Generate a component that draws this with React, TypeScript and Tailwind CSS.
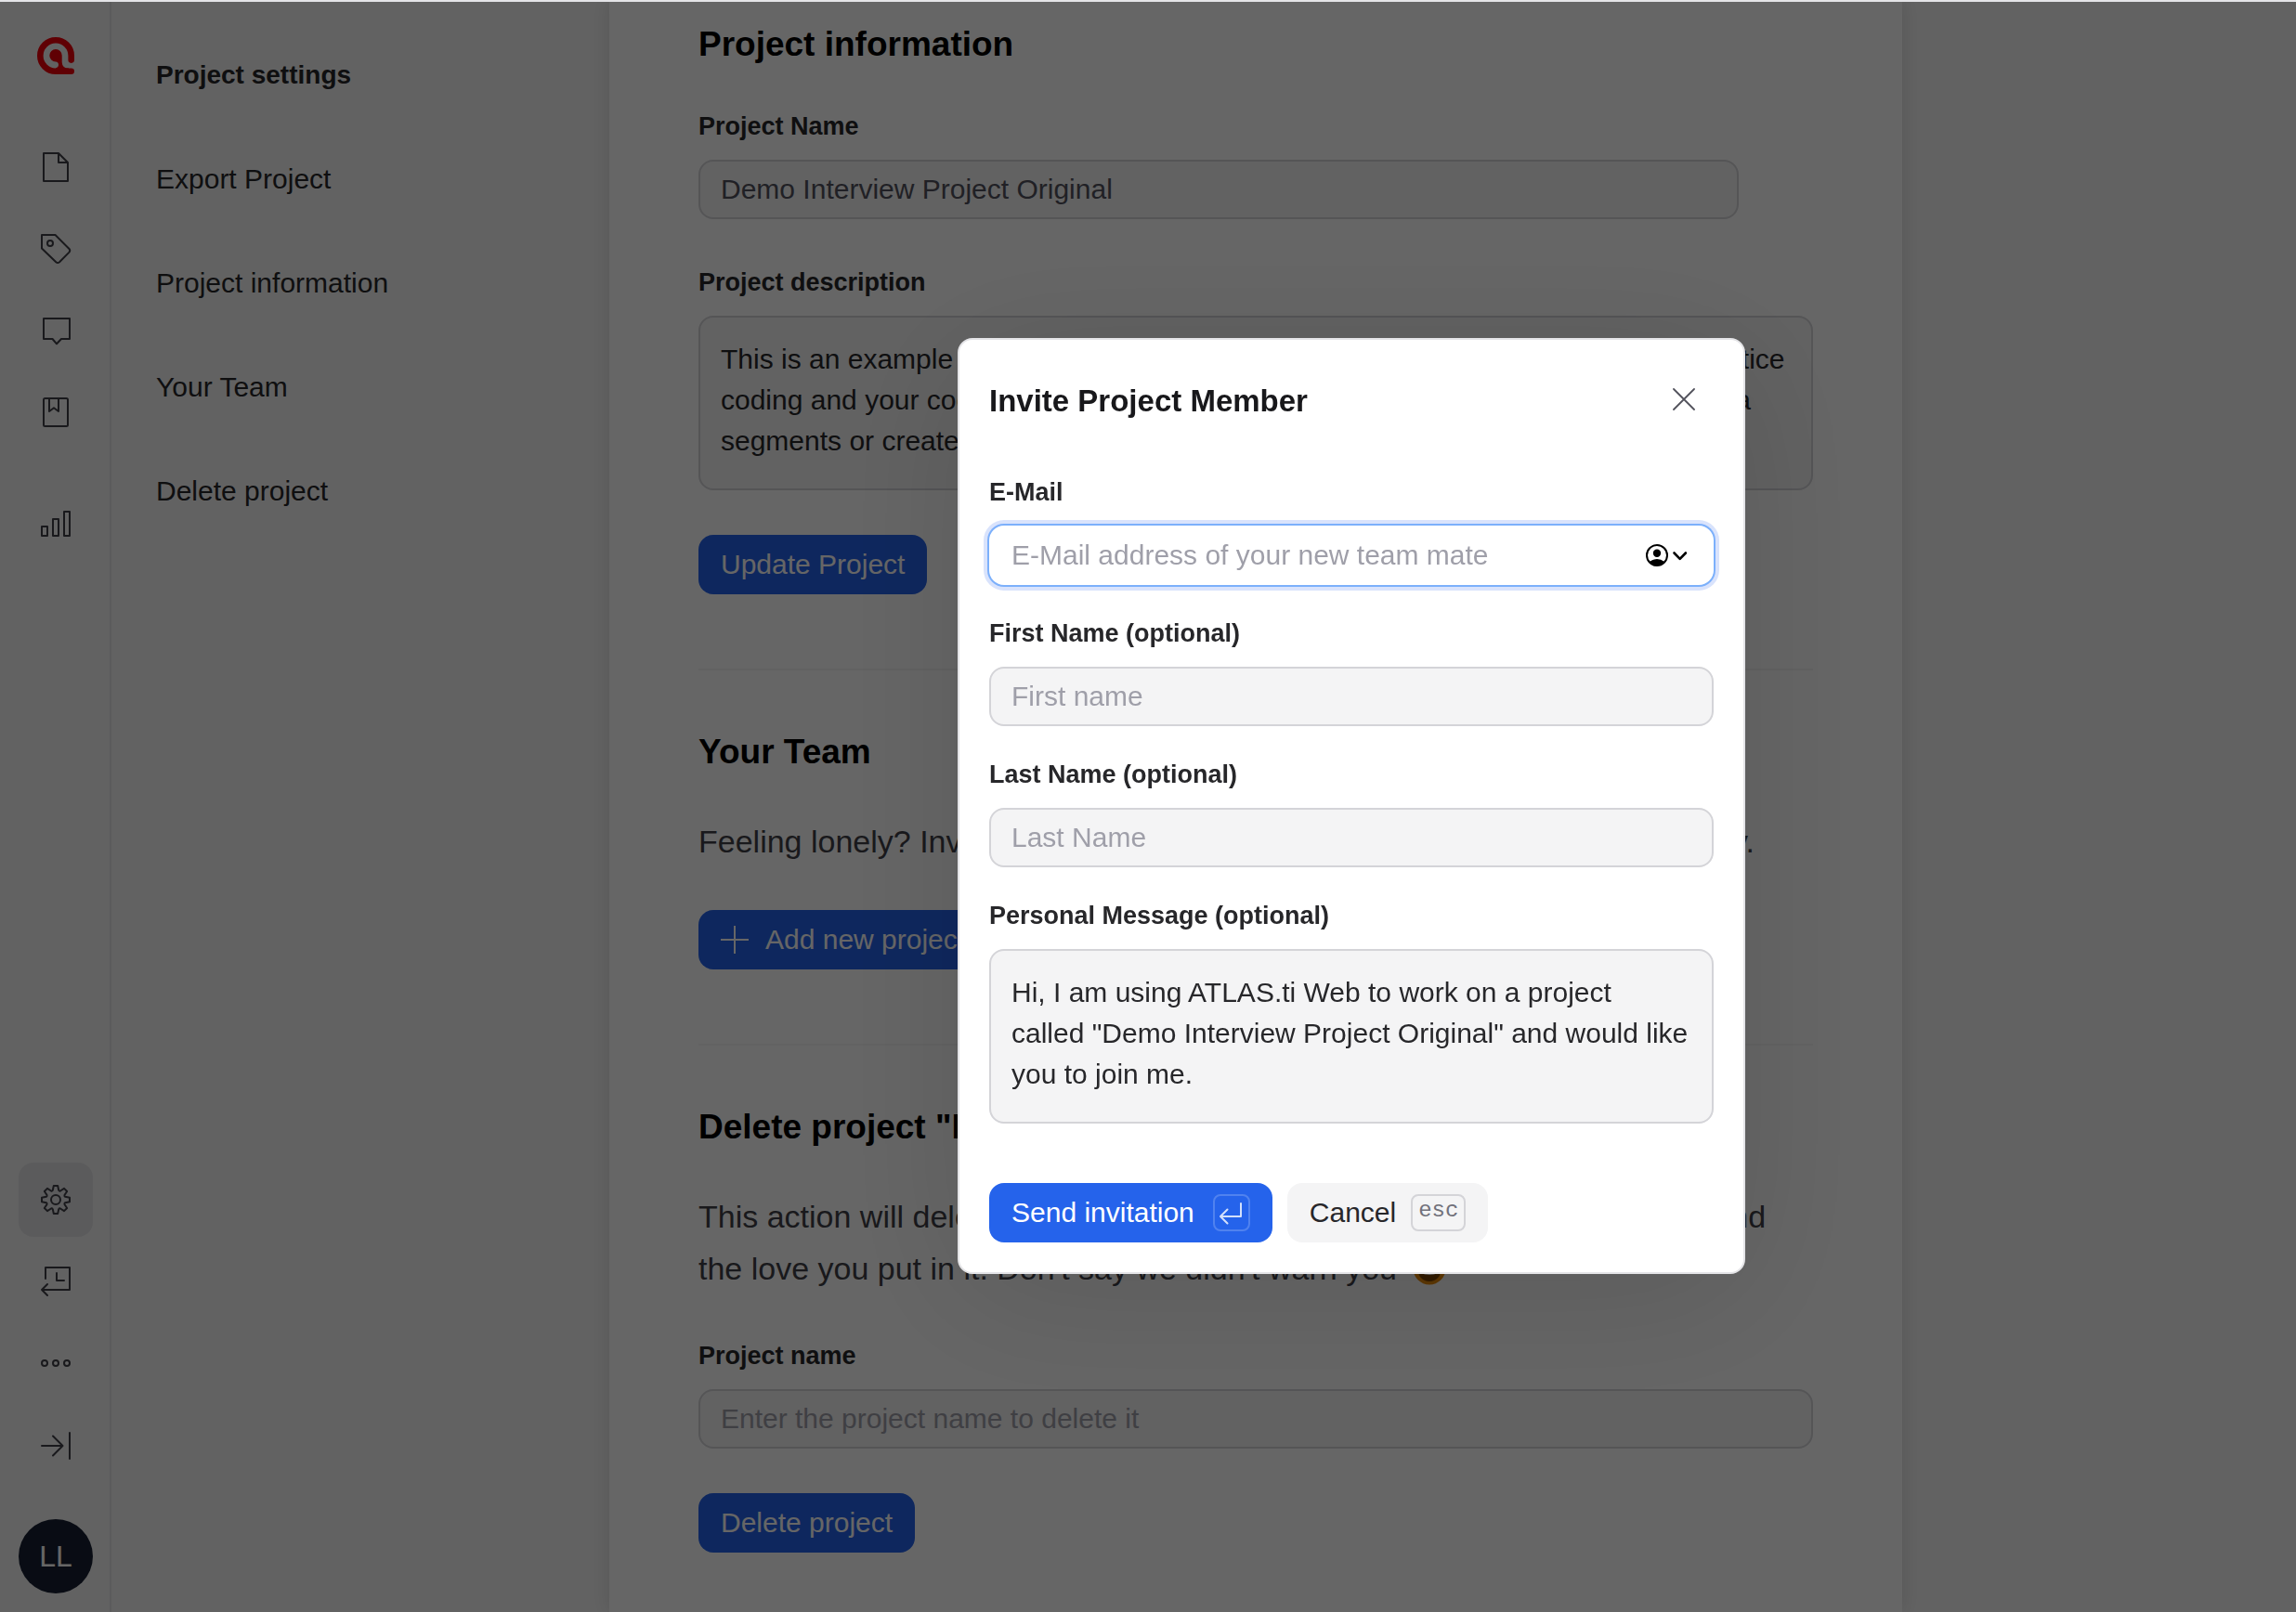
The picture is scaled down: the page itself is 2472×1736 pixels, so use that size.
import { useState } from 'react';
import type { ReactNode } from 'react';

const fieldClass =
  'w-full rounded-2xl border-2 border-zinc-300 bg-zinc-100 px-[22px] text-[30px] leading-[44px] placeholder:text-zinc-400 focus:outline-none';
const primaryButtonClass =
  'inline-flex h-16 items-center rounded-2xl bg-[#2563eb] px-6 text-[30px] leading-[44px] text-white';

const Icon = ({ children }: { children: ReactNode }) => (
  <svg viewBox="0 0 40 40" className="size-10" fill="none" stroke="currentColor" strokeWidth="2" strokeLinecap="round" strokeLinejoin="round" aria-hidden="true">
    {children}
  </svg>
);

const RailButton = ({ label, active, children }: { label: string; active?: boolean; children: ReactNode }) => (
  <button
    type="button"
    aria-label={label}
    className={`flex size-20 items-center justify-center rounded-2xl text-zinc-700 ${active ? 'bg-zinc-200' : ''}`}
  >
    <Icon>{children}</Icon>
  </button>
);

const Logo = () => (
  <svg viewBox="0 0 40 40" className="size-10" aria-hidden="true">
    <path d="M36.7 24.6V20A16.7 16.7 0 1 0 20 36.7H36.7" fill="none" stroke="#f0000a" strokeWidth="6.6" strokeLinecap="round" />
    <path d="M20 13a6.7 6.7 0 0 1 6.7 6.7V27Q27 33.6 34 33.6V35H20V33.2Q23 32.8 23 29.8Q23 26.8 20 26.4A6.7 6.7 0 0 1 20 13Z" fill="#f0000a" />
  </svg>
);

const Sidebar = () => (
  <aside className="flex shrink-0 flex-col items-center border-r-2 border-zinc-200 pt-10 pr-[18px] pb-5 pl-5">
    <a href="#home" aria-label="Home" className="mb-[60px]">
      <Logo />
    </a>
    <div className="flex flex-col gap-2">
      <RailButton label="Documents">
        <path d="M7 5H23L33 15V35H7ZM23 5V15H33" />
      </RailButton>
      <RailButton label="Codes">
        <path d="M5 5h14.5l15 15q1.5 1.8 0 3.6L24 34.2q-2 1.5-3.7 0L5 19.5Z" />
        <circle cx="14" cy="14" r="3" />
      </RailButton>
      <RailButton label="Comments">
        <path d="M7 7H35V29H26L21 34.3L16.5 29H7Z" />
      </RailButton>
      <RailButton label="Memos">
        <rect x="7" y="5" width="26" height="30" rx="1.5" />
        <path d="M13 5V19L18 15.3L23 19V5" />
      </RailButton>
    </div>
    <div className="mt-10">
      <RailButton label="Analysis">
        <path d="M5 23h6v10H5ZM17 15h6v18h-6ZM29 7h6v26h-6Z" />
      </RailButton>
    </div>
    <div className="mt-auto mb-10 flex flex-col gap-2">
      <RailButton label="Settings" active>
        <path d="M16.8 9.8L17.8 5H22.2L23.2 9.8Q24 11 24.95 10.52L29.05 7.84L32.16 10.95L29.48 15.05Q29 16 30.2 16.8L35 17.8V22.2L30.2 23.2Q29 24 29.48 24.95L32.16 29.05L29.05 32.16L24.95 29.48Q24 29 23.2 30.2L22.2 35H17.8L16.8 30.2Q16 29 15.05 29.48L10.95 32.16L7.84 29.05L10.52 24.95Q11 24 9.8 23.2L5 22.2V17.8L9.8 16.8Q11 16 10.52 15.05L7.84 10.95L10.95 7.84L15.05 10.52Q16 11 16.8 9.8Z" />
        <circle cx="20" cy="20" r="5" />
      </RailButton>
      <RailButton label="History">
        <path d="M9 17V5H35V29H5M11 23L5 29L11 35M21 11V19H29" />
      </RailButton>
      <RailButton label="More">
        <circle cx="8" cy="20" r="3" />
        <circle cx="20" cy="20" r="3" />
        <circle cx="32" cy="20" r="3" />
      </RailButton>
      <RailButton label="Expand sidebar">
        <path d="M5 21H27.5M17 10.5L27.5 21L17 31.5M35 7V35" />
      </RailButton>
    </div>
    <button type="button" className="flex size-20 items-center justify-center rounded-full bg-[#172033] text-[32px] text-white">
      LL
    </button>
  </aside>
);

const navItems = ['Export Project', 'Project information', 'Your Team', 'Delete project'];

const SettingsNav = () => (
  <nav className="flex w-[536px] shrink-0 flex-col items-start gap-[68px] pt-[59px] pl-12 text-[30px] leading-[44px] text-zinc-800">
    <h2 className="text-[28px] font-bold">Project settings</h2>
    {navItems.map(item => (
      <a key={item} href={`#${item.toLowerCase().replace(' ', '-')}`}>
        {item}
      </a>
    ))}
  </nav>
);

const FieldLabel = ({ htmlFor, children }: { htmlFor: string; children: ReactNode }) => (
  <label htmlFor={htmlFor} className="mb-4 block text-[27px] leading-10 font-bold text-zinc-800">
    {children}
  </label>
);

const SectionTitle = ({ children }: { children: ReactNode }) => (
  <h2 className="mb-11 truncate text-[37px] leading-[48px] font-bold text-black">{children}</h2>
);

const GrinEmoji = () => (
  <svg viewBox="0 0 36 36" className="ml-2 inline-block size-9 align-[-6px]" role="img" aria-label="grinning face">
    <circle cx="18" cy="18" r="17.5" fill="#e88a0a" />
    <circle cx="18" cy="15" r="15" fill="#ffd02e" />
    <circle cx="12" cy="9" r="2.5" fill="#6b3a00" />
    <circle cx="24" cy="9" r="2.5" fill="#6b3a00" />
    <path d="M5 18H31A13 14 0 0 1 5 18Z" fill="#7a4200" />
    <path d="M6 18H30Q29 25 18 25Q7 25 6 18Z" fill="#ffffff" />
  </svg>
);

const description = `This is an example project with multiple interview transcripts. You can use it to practice
coding and your coding skills, try out the analysis tools, write a comment about data
segments or create a new memo.`;

const SettingsCard = () => {
  const [text, setText] = useState(description);

  return (
    <div className="max-w-[1392px] flex-1 bg-white px-24 pt-6 shadow-[0_0_20px_rgba(0,0,0,0.12)]">
      <section>
        <SectionTitle>Project information</SectionTitle>
        <FieldLabel htmlFor="project-name">Project Name</FieldLabel>
        <div className="mb-12 pr-20">
          <input id="project-name" className={`${fieldClass} block h-16 text-zinc-600`} defaultValue="Demo Interview Project Original" />
        </div>
        <FieldLabel htmlFor="project-description">Project description</FieldLabel>
        <textarea
          id="project-description"
          className={`${fieldClass} mb-12 block h-[188px] resize-none overflow-hidden pt-[23px] text-zinc-800`}
          value={text}
          onChange={e => setText(e.target.value)}
        />
        <button type="button" className={primaryButtonClass}>Update Project</button>
      </section>

      <section className="mt-20 border-t-2 border-zinc-100 pt-16">
        <SectionTitle>Your Team</SectionTitle>
        <p className="mb-[46px] text-[34px] leading-[56px] text-zinc-700">
          Feeling lonely? Invite friends to work on this project with you collaboratively.
        </p>
        <button type="button" className={`${primaryButtonClass} gap-[18px]`}>
          <svg viewBox="0 0 30 30" className="size-[30px]" fill="none" stroke="currentColor" strokeWidth="2" aria-hidden="true">
            <path d="M15 0V30M0 15H30" />
          </svg>
          Add new project member
        </button>
      </section>

      <section className="mt-20 border-t-2 border-zinc-100 pt-16">
        <SectionTitle>Delete project "Demo Interview Project Original"</SectionTitle>
        <p className="mb-[46px] text-[34px] leading-[56px] text-zinc-700">
          This action will delete the complete project including all of its documents and
          <br />
          the love you put in it. Don't say we didn't warn you <GrinEmoji />
        </p>
        <FieldLabel htmlFor="delete-name">Project name</FieldLabel>
        <input id="delete-name" className={`${fieldClass} mb-12 block h-16 text-zinc-800`} placeholder="Enter the project name to delete it" />
        <button type="button" className={primaryButtonClass}>Delete project</button>
      </section>
    </div>
  );
};

const InviteDialog = () => {
  const [message, setMessage] = useState(
    'Hi, I am using ATLAS.ti Web to work on a project called "Demo Interview Project Original" and would like you to join me.',
  );

  return (
    <div
      role="dialog"
      aria-modal="true"
      aria-labelledby="invite-title"
      className="w-full max-w-[848px] rounded-2xl border-2 border-zinc-200 bg-white p-8 shadow-[0_24px_160px_rgba(0,0,0,0.12)]"
    >
      <div className="mb-12 flex h-16 items-end justify-between">
        <h1 id="invite-title" className="text-[33px] leading-[60px] font-bold text-zinc-900">Invite Project Member</h1>
        <button type="button" aria-label="Close" className="flex size-16 items-center justify-center text-zinc-600">
          <svg viewBox="0 0 24 24" className="size-6" fill="none" stroke="currentColor" strokeWidth="1.8" strokeLinecap="round" aria-hidden="true">
            <path d="M1 1L23 23M23 1L1 23" />
          </svg>
        </button>
      </div>

      <form>
        <div className="mb-8">
          <FieldLabel htmlFor="email">E-Mail</FieldLabel>
          <div className="relative">
            <input
              id="email"
              type="email"
              placeholder="E-Mail address of your new team mate"
              className="block h-16 w-full rounded-2xl bg-white px-6 text-[30px] leading-[44px] text-zinc-800 shadow-[0_0_0_2px_#7cb0fb,0_0_0_6px_#d9e3fc] placeholder:text-zinc-400 focus:outline-none"
            />
            <button type="button" aria-label="Choose a contact" className="absolute inset-y-0 right-7 flex items-center text-black">
              <svg viewBox="0 0 46 26" className="h-[26px] w-[46px]" fill="none" stroke="currentColor" aria-hidden="true">
                <circle cx="13" cy="13" r="11" strokeWidth="2" />
                <circle cx="13" cy="10.7" r="4.2" fill="currentColor" stroke="none" />
                <path d="M4.8 20Q13 14 21.2 20A11 11 0 0 1 4.8 20Z" fill="currentColor" stroke="none" />
                <path d="M31.5 10.5l6.2 6.3 6.2-6.3" strokeWidth="2.6" strokeLinecap="round" strokeLinejoin="round" />
              </svg>
            </button>
          </div>
        </div>
        <div className="mb-8">
          <FieldLabel htmlFor="first-name">First Name (optional)</FieldLabel>
          <input id="first-name" className={`${fieldClass} block h-16 text-zinc-800`} placeholder="First name" />
        </div>
        <div className="mb-8">
          <FieldLabel htmlFor="last-name">Last Name (optional)</FieldLabel>
          <input id="last-name" className={`${fieldClass} block h-16 text-zinc-800`} placeholder="Last Name" />
        </div>
        <div className="mb-16">
          <FieldLabel htmlFor="message">Personal Message (optional)</FieldLabel>
          <textarea
            id="message"
            className={`${fieldClass} block h-[188px] resize-none overflow-hidden pt-[23px] text-zinc-800`}
            value={message}
            onChange={e => setMessage(e.target.value)}
          />
        </div>
        <div className="flex gap-4">
          <button type="button" className={`${primaryButtonClass} gap-5`}>
            Send invitation
            <kbd className="flex size-10 items-center justify-center rounded-lg border-2 border-white/20">
              <svg viewBox="0 0 36 36" className="size-9 shrink-0 text-white/80" fill="none" stroke="currentColor" strokeWidth="2" strokeLinecap="round" strokeLinejoin="round" aria-hidden="true">
                <path d="M28 8V22H6M13.5 14.5L6 22L13.5 29.5" />
              </svg>
            </kbd>
          </button>
          <button type="button" className="inline-flex h-16 items-center gap-4 rounded-2xl bg-zinc-100 px-6 text-[30px] leading-[44px] text-zinc-800">
            Cancel
            <kbd className="flex h-10 items-center rounded-lg border-2 border-zinc-300 px-[6px] pb-1 font-['Liberation_Mono',monospace] text-[24px] text-zinc-500">
              esc
            </kbd>
          </button>
        </div>
      </form>
    </div>
  );
};

const App = () => (
  <div className="flex h-screen overflow-hidden bg-[#f5f5f5] font-['Liberation_Sans',Arial,sans-serif]">
    <Sidebar />
    <SettingsNav />
    <main className="flex min-w-0 flex-1">
      <SettingsCard />
    </main>
    <div className="fixed inset-0 flex items-center justify-center bg-black/60 pl-[438px] shadow-[inset_0_2px_0_#e4e4e7]">
      <InviteDialog />
    </div>
  </div>
);

export default App;
